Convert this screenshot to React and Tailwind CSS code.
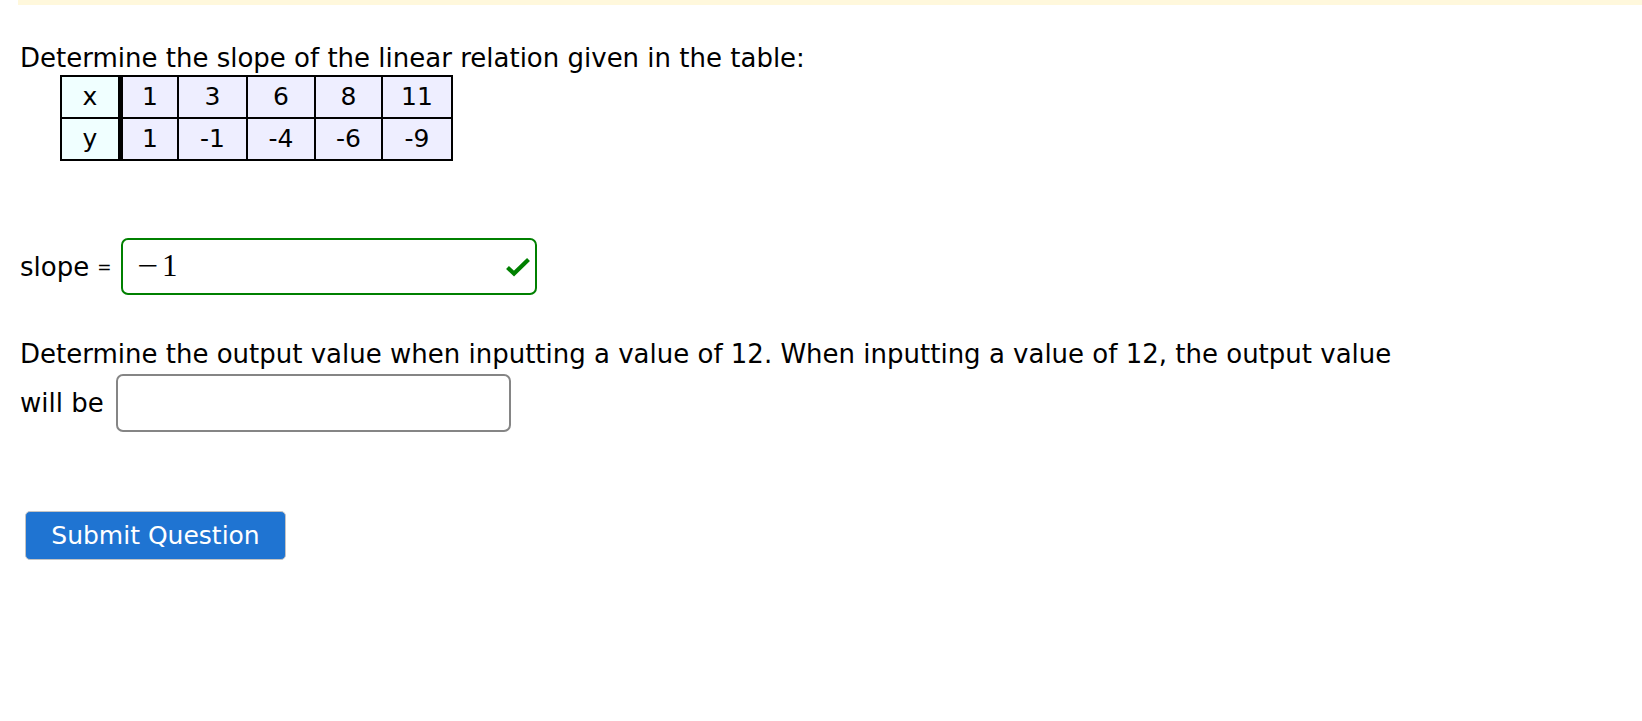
import React from "react";

const xs = ["1", "3", "6", "8", "11"];
const ys = ["1", "-1", "-4", "-6", "-9"];

export default function App() {
  return (
    <div className="min-h-screen bg-white pl-[18px] font-['DejaVu_Sans',sans-serif] text-[26px] text-black">
      <div className="h-[5px] bg-[#fff8dc]" />
      <div className="pl-[2px]">
        <p className="mt-[38px] leading-[30px]">
          Determine the slope of the linear relation given in the table:
        </p>
        <div className="ml-[40px] mt-[2px] grid w-fit grid-cols-[59px_54px_67px_66px_65px_68px] gap-[2px] bg-black p-[2px] text-[25px] leading-[40px]">
          <div className="mr-[3px] h-[40px] bg-[#f0ffff] text-center">x</div>
          {xs.map((v, i) => (
            <div key={"x" + i} className="h-[40px] bg-[#eeeeff] text-center">
              {v}
            </div>
          ))}
          <div className="mr-[3px] h-[40px] bg-[#f0ffff] text-center">y</div>
          {ys.map((v, i) => (
            <div key={"y" + i} className="h-[40px] bg-[#eeeeff] text-center">
              {v}
            </div>
          ))}
        </div>

        <div className="mt-[77px] flex items-center">
          <span className="leading-[30px]">slope</span>
          <span className="ml-[8px] text-[17px] leading-[30px]">=</span>
          <div className="relative ml-[10px] flex h-[57px] w-[416px] items-center rounded-[7px] border-2 border-[#008000] pl-[16px] font-['Liberation_Serif',serif] text-[31px]">
            <span className="inline-block scale-x-[1.2]">−</span>
            <span className="ml-[5px]">1</span>
            <svg
              className="absolute right-[4px] top-[17px]"
              width="26"
              height="20"
              viewBox="0 0 26 20"
              fill="none"
            >
              <path d="M2.5 10.5 L9 16.5 L23.5 2.5" stroke="#008000" strokeWidth="4.2" />
            </svg>
          </div>
        </div>

        <p className="mt-[44px] leading-[30px]">
          Determine the output value when inputting a value of 12. When inputting a value of 12, the output value
        </p>
        <div className="mt-[5px] flex items-center">
          <span className="leading-[30px]">will be</span>
          <div className="ml-[12px] h-[58px] w-[395px] rounded-[7px] border-2 border-[#858585]" />
        </div>

        <button className="ml-[5px] mt-[79px] flex h-[49px] w-[261px] items-center justify-center rounded-[5px] border border-[#c4c4c4] bg-[#1f74d2] text-[25px] text-white leading-[30px]">
          Submit Question
        </button>
      </div>
    </div>
  );
}
